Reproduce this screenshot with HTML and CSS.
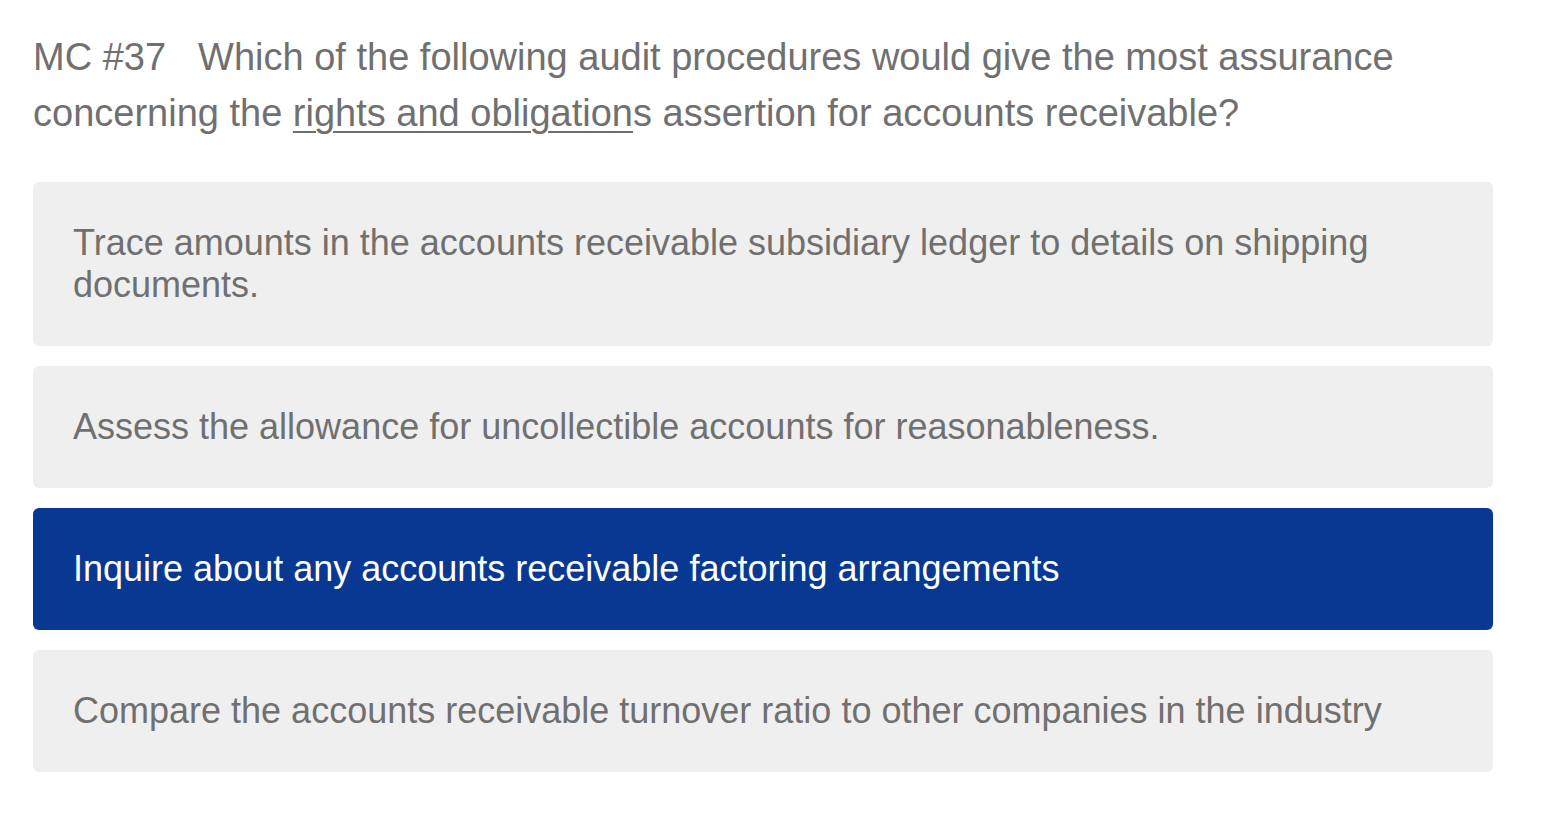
FILE: index.html
```html
<!DOCTYPE html>
<html lang="en">
<head>
    <meta charset="UTF-8">
    <meta name="viewport" content="width=device-width, initial-scale=1.0">
    <title>MC #37</title>
    <link rel="stylesheet" href="styles.css">
</head>
<body>
    <div class="quiz">
        <p class="question"><span class="q-number">MC #37</span>Which of the following audit procedures would give the most assurance concerning the <u>rights and obligation</u>s assertion for accounts receivable?</p>

        <div class="choices">
            <div class="choice">Trace amounts in the accounts receivable subsidiary ledger to details on shipping documents.</div>
            <div class="choice">Assess the allowance for uncollectible accounts for reasonableness.</div>
            <div class="choice selected">Inquire about any accounts receivable factoring arrangements</div>
            <div class="choice">Compare the accounts receivable turnover ratio to other companies in the industry</div>
        </div>
    </div>
</body>
</html>
```

FILE: styles.css
```css
* {
    margin: 0;
    padding: 0;
    box-sizing: border-box;
}

body {
    font-family: 'Liberation Sans', Arial, Helvetica, sans-serif;
    background: #fff;
    color: #707070;
}

.quiz {
    width: 1460px;
    margin: 29px 0 0 33px;
}

.question {
    font-size: 38px;
    line-height: 56px;
    margin-bottom: 41px;
    padding-right: 40px;
}

.question u {
    text-decoration-thickness: 2px;
    text-underline-offset: 5px;
}

.q-number {
    margin-right: 32px;
}

/* Choix de réponse */
.choices {
    display: flex;
    flex-direction: column;
    gap: 20px;
}

.choice {
    background: #efefef;
    border-radius: 6px;
    padding: 40px 80px 40px 40px;
    font-size: 36px;
    line-height: 42px;
}

.choice.selected {
    background: #083892;
    color: #fff;
}
```
